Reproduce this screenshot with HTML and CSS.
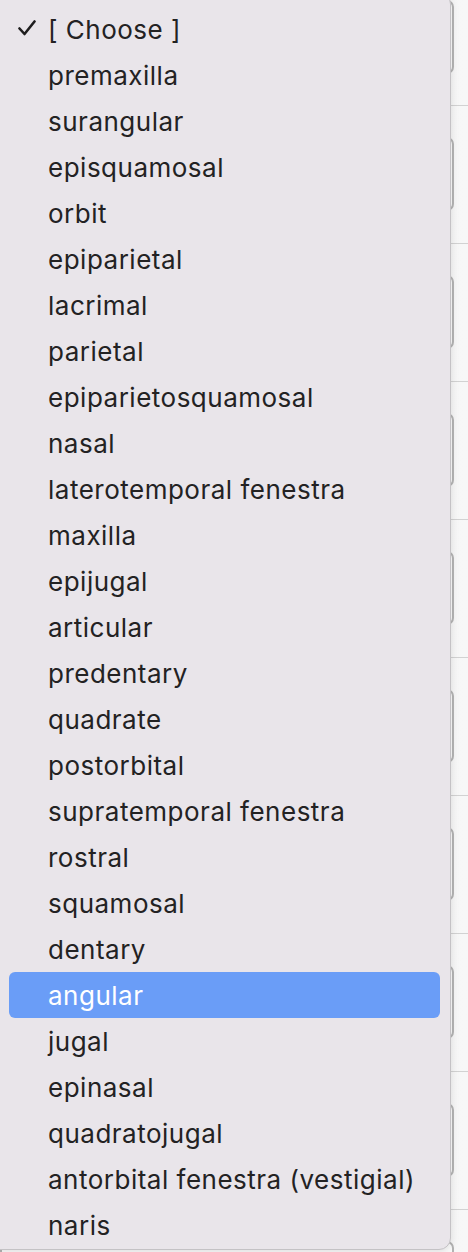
FILE: index.html
```html
<!DOCTYPE html>
<html>
<head>
<meta charset="utf-8">
<link rel="stylesheet" href="styles.css">
</head>
<body>
<div class="screen">
  <div class="page">
    <div class="row first"><div class="control"></div></div>
    <div class="row"><div class="control"></div></div>
    <div class="row"><div class="control"></div></div>
    <div class="row"><div class="control"></div></div>
    <div class="row"><div class="control"></div></div>
    <div class="row"><div class="control"></div></div>
    <div class="row"><div class="control"></div></div>
    <div class="row"><div class="control"></div></div>
    <div class="row"><div class="control"></div></div>
    <div class="row"><div class="control"></div></div>
  </div>
  <div class="menu">
    <ul class="items">
      <li class="item checked"><span class="gutter"><svg class="check" width="18" height="16" viewBox="0 0 18 16"><path d="M1.5 8.5 L6.5 14 L16.5 1.5" fill="none" stroke="#1f1e1f" stroke-width="2.6" stroke-linecap="round" stroke-linejoin="round"/></svg></span>[ Choose ]</li>
      <li class="item"><span class="gutter"></span>premaxilla</li>
      <li class="item"><span class="gutter"></span>surangular</li>
      <li class="item"><span class="gutter"></span>episquamosal</li>
      <li class="item"><span class="gutter"></span>orbit</li>
      <li class="item"><span class="gutter"></span>epiparietal</li>
      <li class="item"><span class="gutter"></span>lacrimal</li>
      <li class="item"><span class="gutter"></span>parietal</li>
      <li class="item"><span class="gutter"></span>epiparietosquamosal</li>
      <li class="item"><span class="gutter"></span>nasal</li>
      <li class="item"><span class="gutter"></span>laterotemporal fenestra</li>
      <li class="item"><span class="gutter"></span>maxilla</li>
      <li class="item"><span class="gutter"></span>epijugal</li>
      <li class="item"><span class="gutter"></span>articular</li>
      <li class="item"><span class="gutter"></span>predentary</li>
      <li class="item"><span class="gutter"></span>quadrate</li>
      <li class="item"><span class="gutter"></span>postorbital</li>
      <li class="item"><span class="gutter"></span>supratemporal fenestra</li>
      <li class="item"><span class="gutter"></span>rostral</li>
      <li class="item"><span class="gutter"></span>squamosal</li>
      <li class="item"><span class="gutter"></span>dentary</li>
      <li class="item active"><span class="gutter"></span>angular</li>
      <li class="item"><span class="gutter"></span>jugal</li>
      <li class="item"><span class="gutter"></span>epinasal</li>
      <li class="item"><span class="gutter"></span>quadratojugal</li>
      <li class="item"><span class="gutter"></span>antorbital fenestra (vestigial)</li>
      <li class="item"><span class="gutter"></span>naris</li>
    </ul>
  </div>
</div>
</body>
</html>
```

FILE: styles.css
```css
html, body {
  margin: 0;
  padding: 0;
}
.screen {
  position: relative;
  width: 468px;
  height: 1252px;
  overflow: hidden;
  background: linear-gradient(90deg, #efefef, #f7f7f7);
  font-family: Inter, "Noto Sans", "Liberation Sans", sans-serif;
}
.page {
  margin-top: -32px;
}
.row {
  height: 138px;
  box-sizing: border-box;
  border-bottom: 1px solid #d2d2d2;
  padding-top: 31px;
}
.row.first {
  padding-top: 32px;
}
.control {
  width: 454px;
  height: 74px;
  box-sizing: border-box;
  border: 2px solid #b4b4b4;
  border-radius: 7px;
  background: #fbfbfb;
}
.menu {
  position: absolute;
  left: -12px;
  top: -8px;
  width: 463px;
  height: 1258px;
  box-sizing: border-box;
  background: #e9e5ea;
  border: 1px solid #c4c2c5;
  border-radius: 12px;
  box-shadow: 0 2px 8px rgba(0, 0, 0, 0.12);
  padding: 13px 10px 0 20px;
}
.items {
  list-style: none;
  margin: 0;
  padding: 0;
}
.item {
  display: flex;
  align-items: center;
  height: 46px;
  font-size: 26px;
  letter-spacing: 0.5px;
  color: #232223;
  border-radius: 6px;
  white-space: nowrap;
}
.gutter {
  width: 39px;
  flex: none;
  display: flex;
  align-items: center;
  padding-left: 9px;
  box-sizing: border-box;
}
.check {
  display: block;
  margin-top: -3px;
}
.active {
  background: #6a9df7;
  color: #ffffff;
}
```
